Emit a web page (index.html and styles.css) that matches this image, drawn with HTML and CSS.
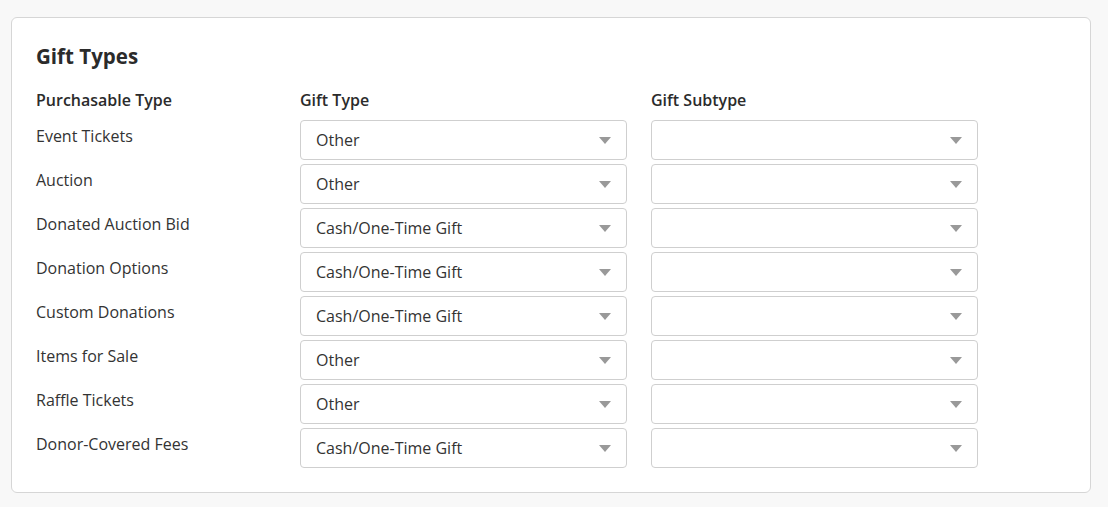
FILE: index.html
```html
<!DOCTYPE html>
<html lang="en">

<head>
  <meta charset="UTF-8">
  <meta name="viewport" content="width=device-width, initial-scale=1">
  <title>Gift Types</title>
  <link rel="stylesheet" href="styles.css">
</head>

<body>
  <section class="card">
    <h2 class="card-title">Gift Types</h2>

    <div class="grid">
      <div class="head">Purchasable Type</div>
      <div class="head">Gift Type</div>
      <div class="head">Gift Subtype</div>

      <div class="label">Event Tickets</div>
      <div class="select"><span>Other</span><svg class="caret" viewBox="0 0 12 7"><path d="M0 0H12L6 7Z"/></svg></div>
      <div class="select"><span></span><svg class="caret" viewBox="0 0 12 7"><path d="M0 0H12L6 7Z"/></svg></div>

      <div class="label">Auction</div>
      <div class="select"><span>Other</span><svg class="caret" viewBox="0 0 12 7"><path d="M0 0H12L6 7Z"/></svg></div>
      <div class="select"><span></span><svg class="caret" viewBox="0 0 12 7"><path d="M0 0H12L6 7Z"/></svg></div>

      <div class="label">Donated Auction Bid</div>
      <div class="select"><span>Cash/One-Time Gift</span><svg class="caret" viewBox="0 0 12 7"><path d="M0 0H12L6 7Z"/></svg></div>
      <div class="select"><span></span><svg class="caret" viewBox="0 0 12 7"><path d="M0 0H12L6 7Z"/></svg></div>

      <div class="label">Donation Options</div>
      <div class="select"><span>Cash/One-Time Gift</span><svg class="caret" viewBox="0 0 12 7"><path d="M0 0H12L6 7Z"/></svg></div>
      <div class="select"><span></span><svg class="caret" viewBox="0 0 12 7"><path d="M0 0H12L6 7Z"/></svg></div>

      <div class="label">Custom Donations</div>
      <div class="select"><span>Cash/One-Time Gift</span><svg class="caret" viewBox="0 0 12 7"><path d="M0 0H12L6 7Z"/></svg></div>
      <div class="select"><span></span><svg class="caret" viewBox="0 0 12 7"><path d="M0 0H12L6 7Z"/></svg></div>

      <div class="label">Items for Sale</div>
      <div class="select"><span>Other</span><svg class="caret" viewBox="0 0 12 7"><path d="M0 0H12L6 7Z"/></svg></div>
      <div class="select"><span></span><svg class="caret" viewBox="0 0 12 7"><path d="M0 0H12L6 7Z"/></svg></div>

      <div class="label">Raffle Tickets</div>
      <div class="select"><span>Other</span><svg class="caret" viewBox="0 0 12 7"><path d="M0 0H12L6 7Z"/></svg></div>
      <div class="select"><span></span><svg class="caret" viewBox="0 0 12 7"><path d="M0 0H12L6 7Z"/></svg></div>

      <div class="label">Donor-Covered Fees</div>
      <div class="select"><span>Cash/One-Time Gift</span><svg class="caret" viewBox="0 0 12 7"><path d="M0 0H12L6 7Z"/></svg></div>
      <div class="select"><span></span><svg class="caret" viewBox="0 0 12 7"><path d="M0 0H12L6 7Z"/></svg></div>
    </div>
  </section>
</body>
</html>
```

FILE: styles.css
```css
body {
  margin: 0;
  padding: 17px 17px 0 11px;
  background-color: #f8f8f8;
  font-family: "Open Sans", "Liberation Sans", Arial, sans-serif;
  color: #333;
}

.card {
  width: 1080px;
  box-sizing: border-box;
  background-color: #fff;
  border: 1px solid #d6d6d6;
  border-radius: 6px;
  padding: 24px 24px 24px 24px;
}

.card-title {
  margin: 0 0 20px 0;
  font-size: 20.5px;
  line-height: 28px;
  font-weight: 700;
  color: #2b2b2b;
}

.grid {
  display: grid;
  grid-template-columns: 240px 327px 327px;
  column-gap: 24px;
  row-gap: 4px;
}

.head {
  font-size: 16px;
  line-height: 20px;
  font-weight: 600;
  padding-bottom: 6px;
  color: #2b2b2b;
}

.label {
  font-size: 16px;
  line-height: 20px;
  padding-top: 6px;
}

.select {
  height: 40px;
  box-sizing: border-box;
  border: 1px solid #cfcfcf;
  border-radius: 4px;
  padding: 0 15px 0 15px;
  display: flex;
  align-items: center;
  justify-content: space-between;
  font-size: 16px;
  color: #333;
}

.caret {
  width: 12px;
  height: 7px;
  fill: #999;
}
```
